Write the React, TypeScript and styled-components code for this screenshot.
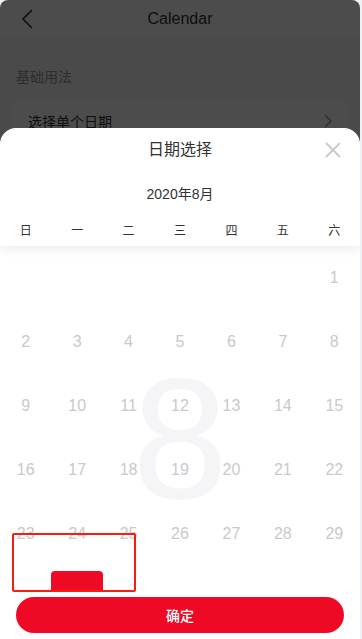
import styled, { createGlobalStyle } from 'styled-components';

const GlobalStyle = createGlobalStyle`
  html, body {
    margin: 0;
    padding: 0;
    background: #eef1f6;
    font-family: "Liberation Sans", "Noto Sans CJK SC", sans-serif;
  }
  * { box-sizing: border-box; }
`;

// Phone frame with rounded corners
const Frame = styled.div`
  position: relative;
  width: 360px;
  height: 639px;
  overflow: hidden;
  border-radius: 8px 8px 0 0;
  background: #f7f8fa;
`;

const NavBar = styled.div`
  position: relative;
  height: 38px;
  background: #fff;
  display: flex;
  align-items: center;
  justify-content: center;
  font-size: 16px;
  color: #323233;
`;

const BackIcon = styled.svg`
  position: absolute;
  left: 20px;
  top: 9px;
`;

const SectionTitle = styled.div`
  padding: 28px 16px 12px;
  font-size: 14px;
  color: #969799;
`;

const Card = styled.div`
  margin: 0 12px;
  background: #fff;
  border-radius: 8px;
  height: 46px;
  display: flex;
  align-items: center;
  justify-content: space-between;
  padding: 0 16px;
  font-size: 14px;
  color: #323233;
`;

const Overlay = styled.div`
  position: absolute;
  inset: 0;
  background: rgba(0, 0, 0, 0.7);
`;

const Popup = styled.div`
  position: absolute;
  left: 0;
  right: 0;
  bottom: 0;
  height: 511px;
  background: #fff;
  border-radius: 16px 16px 0 0;
  display: flex;
  flex-direction: column;
  overflow: hidden;
`;

const Header = styled.div`
  position: relative;
  z-index: 1;
  box-shadow: 0 2px 10px rgba(125, 126, 128, 0.16);
`;

const Title = styled.div`
  height: 44px;
  line-height: 44px;
  text-align: center;
  font-size: 16px;
  color: #323233;
`;

const CloseIcon = styled.svg`
  position: absolute;
  right: 19px;
  top: 14px;
`;

const Subtitle = styled.div`
  height: 44px;
  line-height: 44px;
  text-align: center;
  font-size: 14px;
  color: #323233;
`;

const Weekdays = styled.div`
  display: grid;
  grid-template-columns: repeat(7, 1fr);
  height: 30px;
  line-height: 30px;
  font-size: 12px;
  color: #323233;
  text-align: center;
`;

const Body = styled.div`
  flex: 1;
  overflow: hidden;
`;

// Six week rows; the last one sits under the footer
const Month = styled.div`
  position: relative;
  display: grid;
  grid-template-columns: repeat(7, 1fr);
  grid-auto-rows: 64px;
  height: 384px;
`;

const MonthMark = styled.div`
  position: absolute;
  top: 50%;
  left: 50%;
  transform: translate(-50%, -50%);
  font-size: 172px;
  line-height: 1;
  color: rgba(242, 243, 245, 0.8);
  pointer-events: none;
`;

const Day = styled.div`
  position: relative;
  display: flex;
  align-items: center;
  justify-content: center;
  font-size: 16px;
  color: #c8c9cc;
`;

const Footer = styled.div`
  padding: 7px 16px 6px;
  background: #fff;
`;

const ConfirmButton = styled.button`
  width: 100%;
  height: 36px;
  border: none;
  border-radius: 18px;
  background: #ee0a24;
  color: #fff;
  font-size: 14px;
  font-weight: 500;
  font-family: "Noto Sans CJK SC", sans-serif;
`;

// Annotation overlay drawn over the screenshot
const Marker = styled.div`
  position: absolute;
  left: 12px;
  top: 533px;
  width: 124px;
  height: 59px;
  border: 2px solid #f61d14;
  border-radius: 2px;
`;

const MarkerTab = styled.div`
  position: absolute;
  left: 37px;
  bottom: 0;
  width: 52px;
  height: 19px;
  background: #ee0a24;
  border-radius: 4px 4px 0 0;
`;

const weekdays = ['日', '一', '二', '三', '四', '五', '六'];
const offset = 6;
// Only the rows above the footer are visible
const days = Array.from({ length: 29 }, (_, i) => i + 1);

export default function App() {
  return (
    <>
      <GlobalStyle />
      <Frame>
        <NavBar>
          <span>Calendar</span>
          <BackIcon width="14" height="20" viewBox="0 0 14 20">
            <path d="M12 1 L3 10 L12 19" fill="none" stroke="#323233" strokeWidth="1.6" />
          </BackIcon>
        </NavBar>
        <SectionTitle>基础用法</SectionTitle>
        <Card>
          <span>选择单个日期</span>
          <svg width="8" height="14" viewBox="0 0 8 14">
            <path d="M1 1 L7 7 L1 13" fill="none" stroke="#969799" strokeWidth="1.4" />
          </svg>
        </Card>
        <Overlay />
        <Popup>
          <Header>
            <Title>日期选择</Title>
            <CloseIcon width="16" height="16" viewBox="0 0 16 16">
              <path d="M1 1 L15 15 M15 1 L1 15" stroke="#c8c9cc" strokeWidth="1.8" />
            </CloseIcon>
            <Subtitle>2020年8月</Subtitle>
            <Weekdays>
              {weekdays.map(w => <span key={w}>{w}</span>)}
            </Weekdays>
          </Header>
          <Body>
            <Month>
              <MonthMark>8</MonthMark>
              {Array.from({ length: offset }, (_, i) => <Day key={`e${i}`} />)}
              {days.map(d => <Day key={d}>{d}</Day>)}
            </Month>
          </Body>
          <Footer>
            <ConfirmButton>确定</ConfirmButton>
          </Footer>
        </Popup>
        <Marker>
          <MarkerTab />
        </Marker>
      </Frame>
    </>
  );
}
